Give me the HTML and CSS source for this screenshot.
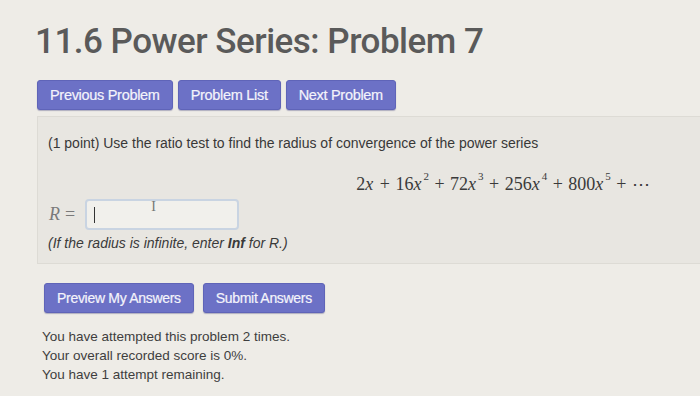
FILE: index.html
```html
<!DOCTYPE html>
<html>
<head>
<meta charset="utf-8">
<link rel="stylesheet" href="styles.css">
</head>
<body>
<div class="page">
  <h1 class="title">11.6 Power Series: Problem 7</h1>
  <div class="nav">
    <span class="btn">Previous Problem</span>
    <span class="btn">Problem List</span>
    <span class="btn">Next Problem</span>
  </div>
  <div class="problem">
    <p class="intro">(1 point) Use the ratio test to find the radius of convergence of the power series</p>
    <div class="display">
      <span class="math">2<i>x</i><span class="op">+</span>16<i>x</i><sup>2</sup><span class="op">+</span>72<i>x</i><sup>3</sup><span class="op">+</span>256<i>x</i><sup>4</sup><span class="op">+</span>800<i>x</i><sup>5</sup><span class="op">+</span>⋯</span>
    </div>
    <div class="answer">
      <span class="math rlabel"><i>R</i><span class="eq">=</span></span>
      <span class="input"><span class="caret"></span><span class="ibeam">I</span></span>
    </div>
    <p class="hint">(If the radius is infinite, enter <b>Inf</b> for R.)</p>
  </div>
  <div class="actions">
    <span class="btn">Preview My Answers</span>
    <span class="btn">Submit Answers</span>
  </div>
  <div class="status">
    <p>You have attempted this problem 2 times.</p>
    <p>Your overall recorded score is 0%.</p>
    <p>You have 1 attempt remaining.</p>
  </div>
</div>
</body>
</html>
```
FILE: styles.css
```css
html, body {
  margin: 0;
  padding: 0;
  background: #eeece7;
  height: 100%;
  overflow: hidden;
}
.page {
  padding: 21px 0 0 35px;
  font-family: "Liberation Sans", Arial, sans-serif;
  color: #3c3c3c;
}
.title {
  margin: 0;
  font-family: Roboto, "Liberation Sans", sans-serif;
  font-size: 35px;
  font-weight: 500;
  color: #5a5a5a;
  letter-spacing: -0.5px;
  line-height: 42px;
}
.nav {
  display: flex;
  gap: 5px;
  margin-top: 17px;
  margin-left: 2px;
}
.btn {
  display: inline-block;
  background: #6c71c6;
  color: #f4f4fb;
  font-size: 14.5px;
  line-height: 18px;
  padding: 5px 12px;
  border-radius: 3px;
  border: 1px solid #5f64b8;
  box-shadow: 0 1px 1px rgba(60, 60, 120, 0.35);
  letter-spacing: -0.3px;
  -webkit-text-stroke: 0.2px #f4f4fb;
}
.problem {
  margin-top: 6px;
  margin-left: 2px;
  background: #e8e6e1;
  border: 1px solid #dddbd5;
  border-right: none;
  padding: 18px 0 16px 10px;
  height: 112px;
}
.intro {
  margin: 0;
  font-size: 14px;
  color: #383838;
}
.display {
  display: flex;
  justify-content: flex-end;
  padding-right: 50px;
  margin-top: 22px;
}
.math {
  font-family: "Liberation Serif", "Times New Roman", serif;
  font-size: 18px;
  color: #3a3a3a;
}
.math i {
  padding-right: 1px;
}
.op {
  padding: 0 5.5px;
}
.math sup {
  font-size: 11px;
  vertical-align: 10px;
  line-height: 0;
  padding-left: 1px;
}
.answer {
  display: flex;
  align-items: center;
  gap: 10px;
  margin-top: 4px;
  margin-left: 1px;
}
.rlabel {
  color: #7a7a7a;
}
.eq {
  padding-left: 4px;
}
.input {
  position: relative;
  width: 150px;
  height: 27px;
  background: #f1f0ec;
  border: 2px solid #c9d4e2;
  border-radius: 4px;
  display: inline-block;
}
.caret {
  position: absolute;
  left: 7px;
  top: 6px;
  width: 1px;
  height: 16px;
  background: #333;
}
.ibeam {
  position: absolute;
  left: 64px;
  top: -2px;
  font-family: "Liberation Serif", serif;
  font-size: 14px;
  color: #777;
}
.hint {
  margin: 5px 0 0 0;
  font-size: 14px;
  font-style: italic;
  color: #3a3a3a;
}
.actions {
  display: flex;
  gap: 9px;
  margin-top: 19px;
  margin-left: 9px;
}
.actions .btn {
  font-size: 14px;
  padding: 5px 12px;
  letter-spacing: -0.3px;
}
.status {
  margin-top: 14px;
  margin-left: 7px;
}
.status p {
  margin: 0;
  font-size: 13.5px;
  line-height: 19px;
  color: #3e3e3e;
}
```
